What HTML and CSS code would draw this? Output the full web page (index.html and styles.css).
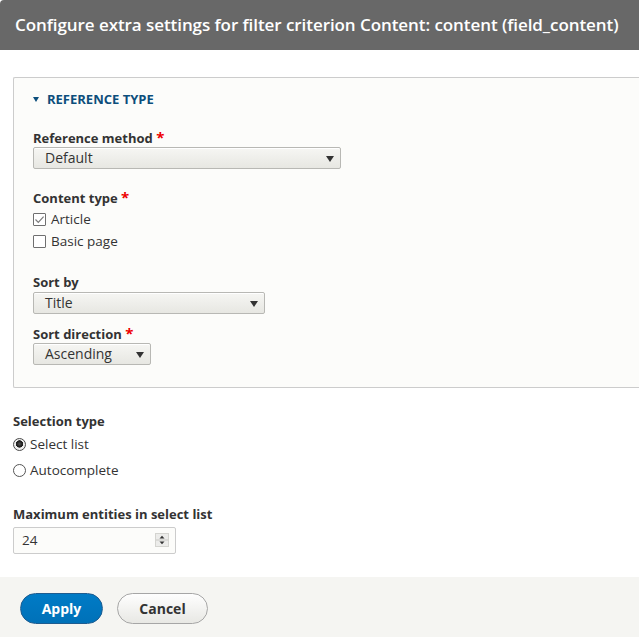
FILE: index.html
```html
<!DOCTYPE html>
<html lang="en">
<head>
<meta charset="utf-8">
<title>Configure extra settings</title>
<link rel="stylesheet" href="styles.css">
</head>
<body>
<div class="dialog">
  <div class="titlebar">
    <h1 class="title">Configure extra settings for filter criterion Content: content (field_content)</h1>
  </div>
  <div class="content">
    <div class="details">
      <div class="summary"><span class="caret"></span>REFERENCE TYPE</div>

      <div class="label mt-20">Reference method <span class="req">*</span></div>
      <div class="select w-wide">Default<span class="arrow"></span></div>

      <div class="label mt-19">Content type <span class="req">*</span></div>
      <div class="check-row mt-3"><span class="checkbox checked"><svg viewBox="0 0 11 11" width="11" height="11"><path d="M1.5 5.5 L4.3 8.3 L9.6 2.6" fill="none" stroke="#7b7b7b" stroke-width="1.2"/></svg></span>Article</div>
      <div class="check-row mt-2"><span class="checkbox"></span>Basic page</div>

      <div class="label mt-22">Sort by</div>
      <div class="select w-mid">Title<span class="arrow"></span></div>

      <div class="label mt-10">Sort direction <span class="req">*</span></div>
      <div class="select w-small">Ascending<span class="arrow"></span></div>
    </div>

    <div class="label mt-24">Selection type</div>
    <div class="radio-row mt-4"><span class="radio selected"></span>Select list</div>
    <div class="radio-row mt-6"><span class="radio"></span>Autocomplete</div>

    <div class="label mt-25">Maximum entities in select list</div>
    <div class="number mt-4">24<span class="spinner"><svg viewBox="0 0 14 14" width="14" height="14"><rect x="0.5" y="0.5" width="13" height="13" fill="#ececea" stroke="#d4d4d0"/><line x1="1" y1="7" x2="13" y2="7" stroke="#c8c8c4"/><path d="M4.5 5.5 L7 2.8 L9.5 5.5 Z" fill="#333"/><path d="M4.5 8.5 L7 11.2 L9.5 8.5 Z" fill="#333"/></svg></span></div>
  </div>
  <div class="footer">
    <button class="btn btn-primary" type="button">Apply</button>
    <button class="btn btn-secondary" type="button">Cancel</button>
  </div>
</div>
</body>
</html>
```

FILE: styles.css
```css
html, body {
  margin: 0;
  padding: 0;
}

body {
  width: 639px;
  height: 637px;
  overflow: hidden;
  background: #fff;
  font-family: "Open Sans", "DejaVu Sans", sans-serif;
  color: #333;
}

.dialog {
  display: flex;
  flex-direction: column;
  height: 637px;
}

.titlebar {
  flex: none;
  height: 50px;
  background: #686868;
  border-top-left-radius: 4px;
  display: flex;
  align-items: center;
  padding-left: 15px;
  box-sizing: border-box;
}

.title {
  margin: 0 0 2px 0;
  font-size: 17px;
  font-weight: 600;
  color: #fff;
  white-space: nowrap;
  letter-spacing: -0.07px;
}

.content {
  flex: 1;
  padding: 27px 0 0 13px;
  display: flex;
  flex-direction: column;
  align-items: flex-start;
}

.details {
  width: 640px;
  box-sizing: border-box;
  border: 1px solid #ccc;
  border-right: none;
  border-radius: 2px 0 0 2px;
  background: #fcfcfa;
  padding: 12px 0 22px 19px;
  display: flex;
  flex-direction: column;
  align-items: flex-start;
}

.summary {
  height: 18px;
  line-height: 18px;
  font-size: 13px;
  font-weight: 700;
  color: #0c4e7c;
  display: flex;
  align-items: center;
}

.caret {
  width: 0;
  height: 0;
  border-left: 3px solid transparent;
  border-right: 3px solid transparent;
  border-top: 5px solid #0c4e7c;
  margin-right: 8px;
}

.label {
  height: 18px;
  line-height: 18px;
  font-size: 13px;
  font-weight: 700;
  color: #333;
  white-space: nowrap;
}

.req {
  color: #e00;
  font-size: 15px;
}

.mt-2 { margin-top: 2px; }
.mt-3 { margin-top: 3px; }
.mt-4 { margin-top: 4px; }
.mt-6 { margin-top: 6px; }
.mt-10 { margin-top: 10px; }
.mt-19 { margin-top: 19px; }
.mt-20 { margin-top: 20px; }
.mt-22 { margin-top: 22px; }
.mt-24 { margin-top: 24px; }
.mt-25 { margin-top: 25px; }

.select {
  position: relative;
  margin-top: 1px;
  height: 22px;
  box-sizing: border-box;
  border: 1px solid #b8b8b4;
  border-radius: 2px;
  background: linear-gradient(#f6f6f3, #e7e7e2);
  box-shadow: inset 0 1px 0 #fff;
  font-size: 14px;
  line-height: 20px;
  padding-left: 11px;
  color: #333;
}

.w-wide { width: 308px; }
.w-mid { width: 232px; }
.w-small { width: 118px; }

.arrow {
  position: absolute;
  right: 6px;
  top: 8px;
  width: 0;
  height: 0;
  border-left: 4px solid transparent;
  border-right: 4px solid transparent;
  border-top: 6px solid #333;
}

.check-row,
.radio-row {
  height: 20px;
  display: flex;
  align-items: center;
  font-size: 13.5px;
  color: #333;
  white-space: nowrap;
}

.checkbox {
  width: 13px;
  height: 13px;
  box-sizing: border-box;
  border: 1px solid #6f6f6f;
  border-radius: 1px;
  background: #fff;
  margin-right: 5px;
  display: flex;
  align-items: center;
  justify-content: center;
}

.radio {
  width: 13px;
  height: 13px;
  box-sizing: border-box;
  border: 1px solid #555;
  border-radius: 50%;
  background: #fff;
  margin-right: 4px;
}

.radio.selected {
  border-color: #4a4a4a;
  background: radial-gradient(circle at 50% 45%, #555 0, #222 2.6px, #222 3.4px, #eee 3.9px, #f4f4f4 100%);
}

.number {
  position: relative;
  width: 163px;
  height: 27px;
  box-sizing: border-box;
  border: 1px solid #ccc;
  border-radius: 2px;
  background: #fcfcfa;
  font-size: 13.5px;
  line-height: 25px;
  padding-left: 8px;
  color: #333;
}

.spinner {
  position: absolute;
  right: 6px;
  top: 5px;
  width: 14px;
  height: 14px;
  display: block;
}

.spinner svg {
  display: block;
}

.footer {
  flex: none;
  height: 60px;
  box-sizing: border-box;
  background: #f5f5f2;
  padding: 16px 0 0 20px;
  display: flex;
  align-items: flex-start;
  gap: 14px;
}

.btn {
  height: 31px;
  box-sizing: border-box;
  border-radius: 20px;
  font-family: "Open Sans", "DejaVu Sans", sans-serif;
  font-size: 14px;
  font-weight: 700;
  padding: 0;
  cursor: pointer;
}

.btn-primary {
  width: 83px;
  border: 1px solid #1e5c90;
  background: linear-gradient(#007bc6, #0071b8);
  color: #fff;
}

.btn-secondary {
  width: 91px;
  border: 1px solid #a6a6a6;
  background: linear-gradient(#fefefe, #e8e8e4);
  color: #333;
}
```
